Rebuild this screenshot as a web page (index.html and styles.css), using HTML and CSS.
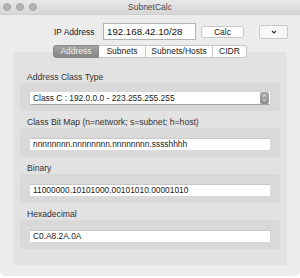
FILE: index.html
```html
<!DOCTYPE html>
<html>
<head>
<meta charset="utf-8">
<link rel="stylesheet" href="styles.css">
</head>
<body>
<div class="window">
  <div class="titlebar">
    <div class="lights"><span></span><span></span><span></span></div>
    <div class="title">SubnetCalc</div>
    <div></div>
  </div>
  <div class="toprow">
    <div class="ip-label">IP Address</div>
    <div class="ip-field">192.168.42.10/28</div>
    <div class="btn calc">Calc</div>
    <div class="btn menu">
      <svg width="6" height="4" viewBox="0 0 6 4"><path d="M1 1 L3 3 L5 1" fill="none" stroke="#333" stroke-width="1.1"/></svg>
    </div>
  </div>
  <div class="tabs">
    <div class="tab active t1">Address</div>
    <div class="tab t2">Subnets</div>
    <div class="tab t3">Subnets/Hosts</div>
    <div class="tab t4">CIDR</div>
  </div>
  <div class="group">
    <div class="section">
      <div class="label">Address Class Type</div>
      <div class="inset first">
        <div class="popup">
          <span class="ptext">Class C : 192.0.0.0 - 223.255.255.255</span>
          <span class="stepper">
            <svg width="9" height="12" viewBox="0 0 9 12"><path d="M2.8 4.6 L4.5 3 L6.2 4.6 M2.8 7.4 L4.5 9 L6.2 7.4" fill="none" stroke="#fff" stroke-width="0.9"/></svg>
          </span>
        </div>
      </div>
    </div>
    <div class="section">
      <div class="label">Class Bit Map (n=network; s=subnet; h=host)</div>
      <div class="inset"><div class="field">nnnnnnnn.nnnnnnnn.nnnnnnnn.sssshhhh</div></div>
    </div>
    <div class="section">
      <div class="label">Binary</div>
      <div class="inset"><div class="field">11000000.10101000.00101010.00001010</div></div>
    </div>
    <div class="section">
      <div class="label">Hexadecimal</div>
      <div class="inset"><div class="field">C0.A8.2A.0A</div></div>
    </div>
  </div>
</div>
</body>
</html>
```
FILE: styles.css
```css
html, body {
  margin: 0;
  padding: 0;
}
body {
  background: #ffffff;
  font-family: "Liberation Sans", Arial, sans-serif;
  width: 300px;
  height: 278px;
  overflow: hidden;
}
.window {
  width: 300px;
  height: 276px;
  background: #ececec;
  border-radius: 0 0 5px 5px;
  display: flex;
  flex-direction: column;
}
.titlebar {
  height: 14px;
  border-bottom: 1px solid #d0d0d0;
  background: linear-gradient(#e8e8e8, #d6d6d6);
  display: grid;
  grid-template-columns: 1fr auto 1fr;
  align-items: center;
}
.lights {
  display: flex;
  gap: 5px;
  padding-left: 3px;
}
.lights span {
  width: 8px;
  height: 8px;
  border-radius: 50%;
  background: #b3b3b3;
  box-sizing: border-box;
  border: 0.5px solid #a6a6a6;
}
.title {
  font-size: 8.5px;
  color: #4a4a4a;
  line-height: 14px;
}
.toprow {
  margin-top: 8px;
  height: 17px;
  display: flex;
  align-items: center;
  padding-left: 54px;
}
.ip-label {
  width: 41px;
  font-size: 8.4px;
  color: #222;
  white-space: nowrap;
}
.ip-field {
  margin-left: 8px;
  width: 93px;
  height: 17px;
  box-sizing: border-box;
  border: 1px solid #b2b2b2;
  background: #fff;
  font-size: 9.7px;
  line-height: 15px;
  padding-left: 3px;
  color: #111;
  white-space: nowrap;
}
.btn {
  box-sizing: border-box;
  background: #fff;
  border: 1px solid #c9c9c9;
  border-radius: 3px;
  display: flex;
  align-items: center;
  justify-content: center;
}
.calc {
  margin-left: 5px;
  width: 43px;
  height: 12px;
  font-size: 8.5px;
  color: #222;
}
.menu {
  margin-left: 15px;
  width: 29px;
  height: 14px;
  background: #f7f7f7;
  border-radius: 2px;
}
.tabs {
  margin-top: 5px;
  margin-bottom: -6px;
  height: 13px;
  display: flex;
  justify-content: center;
  position: relative;
  z-index: 1;
}
.tab {
  box-sizing: border-box;
  height: 13px;
  background: #fff;
  border: 1px solid #c6c6c6;
  border-left: none;
  font-size: 8.5px;
  line-height: 11px;
  color: #222;
  text-align: center;
}
.tab.t1 { width: 46px; border-left: 1px solid #c6c6c6; border-radius: 3px 0 0 3px; }
.tab.t2 { width: 47px; }
.tab.t3 { width: 67px; }
.tab.t4 { width: 34px; border-radius: 0 3px 3px 0; }
.tab.active {
  background: linear-gradient(#a2a2a2, #868686);
  border-color: #8a8a8a;
  color: #ededed;
}
.group {
  margin: 0 13px;
  background: #e2e2e2;
  border-radius: 4px;
  padding: 20px 7px 16px;
  display: flex;
  flex-direction: column;
  gap: 6px;
}
.section {
  display: flex;
  flex-direction: column;
  gap: 1px;
}
.label {
  padding-left: 7px;
  font-size: 8.6px;
  line-height: 10px;
  color: #333;
  white-space: nowrap;
}
.inset {
  background: #d9d9d9;
  border-radius: 4px;
  padding: 10px 10px 7px;
}
.inset.first {
  padding-top: 9px;
}
.field, .popup {
  height: 12px;
  box-sizing: border-box;
  background: #fff;
  border: 1px solid #c8c8c8;
  border-width: 1px 0 0;
  font-size: 8.4px;
  line-height: 11px;
  color: #1a1a1a;
  padding-left: 3px;
  white-space: nowrap;
}
.popup {
  display: flex;
  align-items: center;
  justify-content: space-between;
  border-top: none;
  box-shadow: 0 0.5px 1px rgba(0,0,0,0.25);
  line-height: 12px;
}
.stepper {
  width: 9px;
  height: 12px;
  margin-right: 1px;
  border-radius: 2px;
  background: linear-gradient(#ababab, #8c8c8c);
  display: flex;
}
```
